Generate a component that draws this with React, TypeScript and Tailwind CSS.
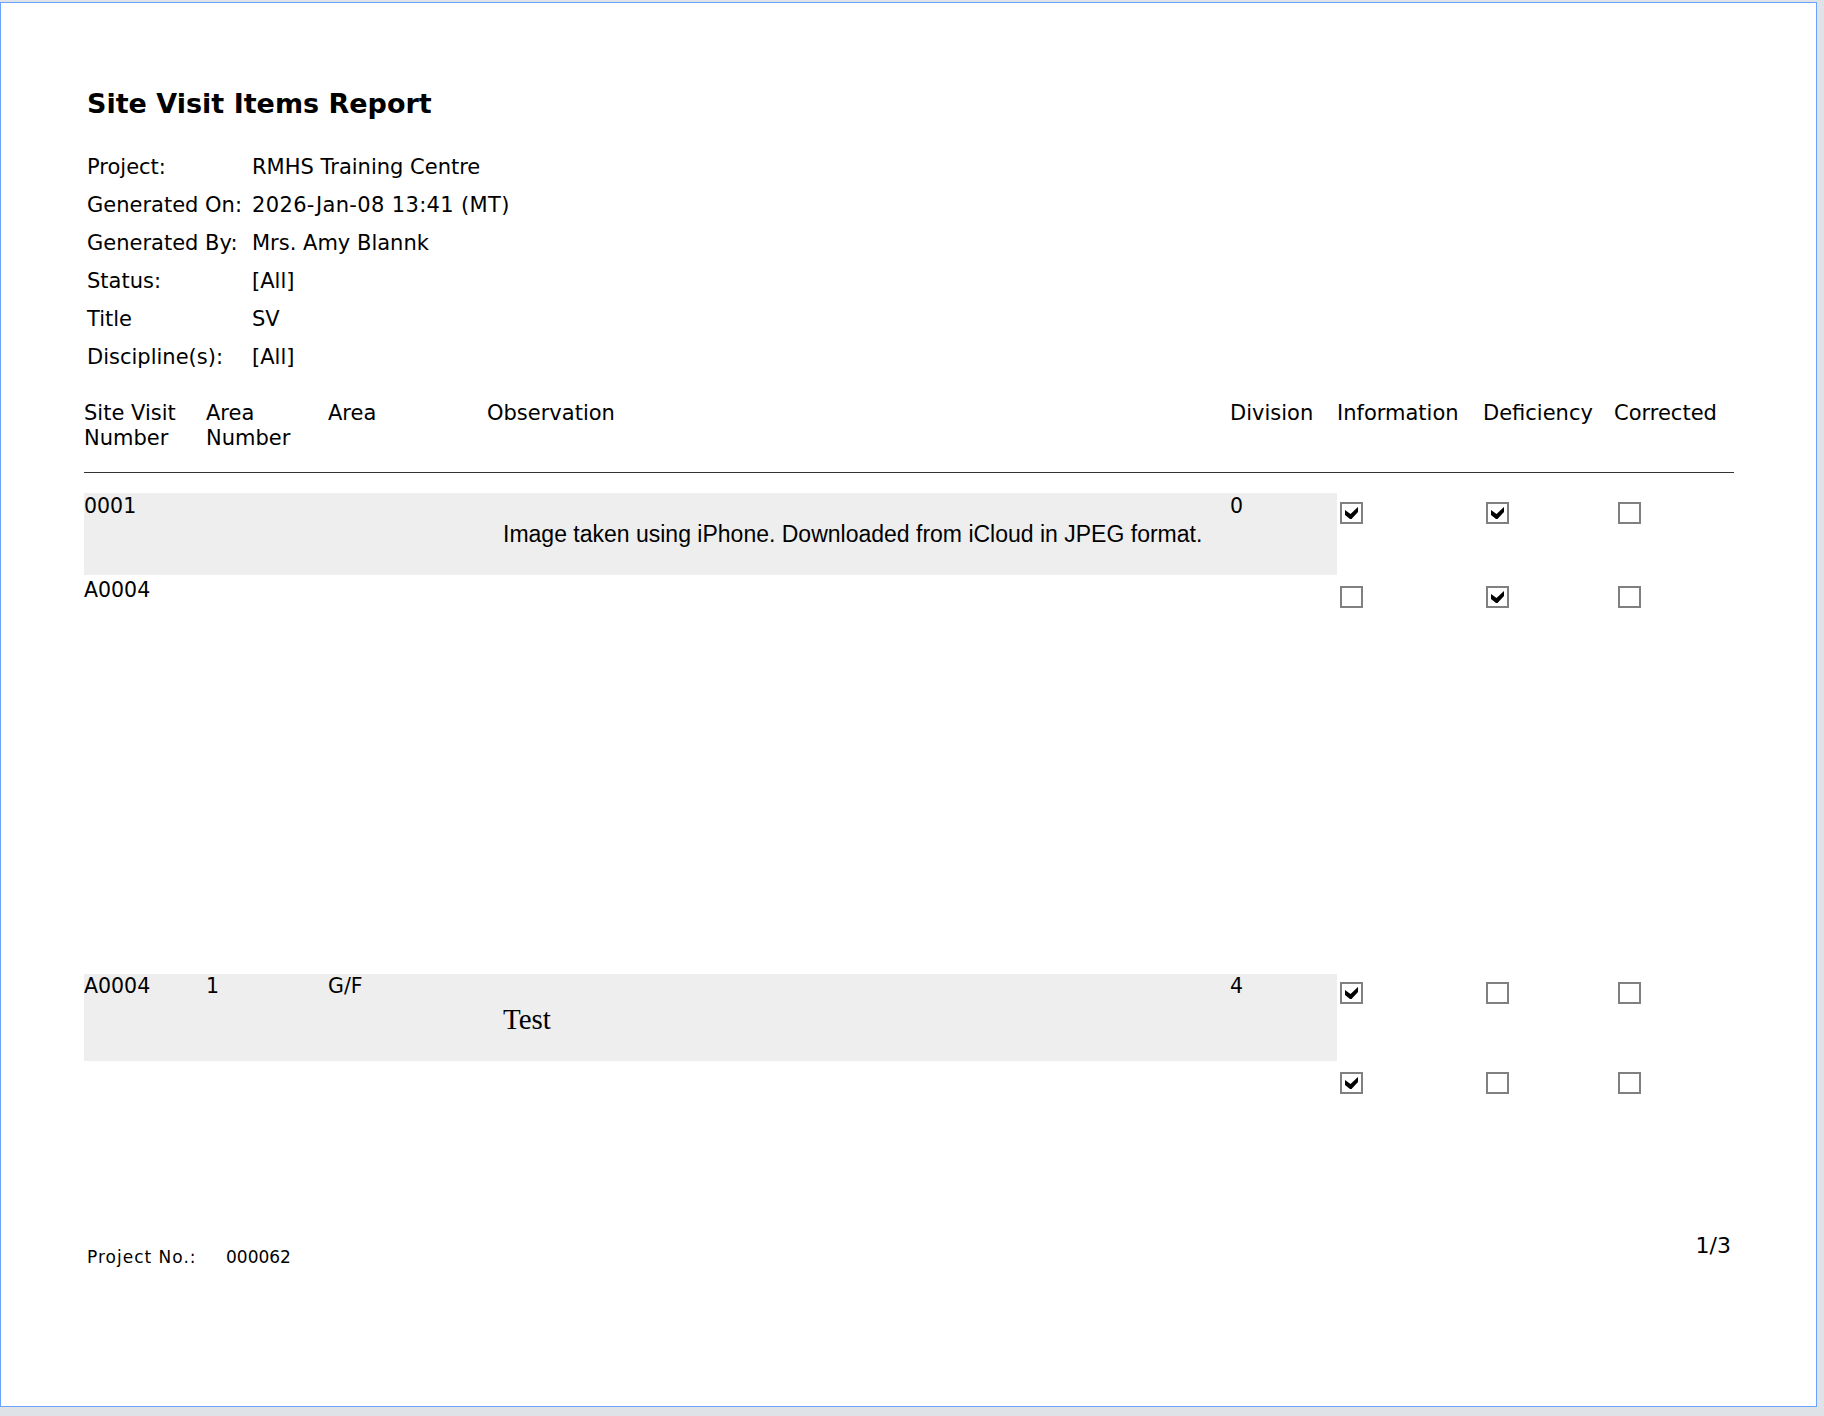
const SANS = "font-['DejaVu_Sans',sans-serif]";

function Check({ on }: { on?: boolean }) {
  return (
    <span className="flex h-[22px] w-[23px] items-center justify-center border-2 border-[#808080] bg-white">
      {on && (
        <svg width="13" height="12" viewBox="0 0 13 12">
          <path d="M0 3 L5.5 7 L13 0 L13 5 L6.5 12 L5 12 L0 8 Z" fill="#000" />
        </svg>
      )}
    </span>
  );
}

const META = [
  ['Project:', 'RMHS Training Centre', ''],
  ['Generated On:', '2026-Jan-08 13:41 (MT)', 'tracking-[0.35px]'],
  ['Generated By:', 'Mrs. Amy Blannk', ''],
  ['Status:', '[All]', ''],
  ['Title', 'SV', ''],
  ['Discipline(s):', '[All]', ''],
];

// column template shared by the item rows
const COLS = 'grid grid-cols-[122px_122px_159px_743px_107px] text-[20.5px]';

function Marks({ marks, className }: { marks: boolean[]; className: string }) {
  return (
    <div className={`flex ${className}`}>
      <div className="w-[146px] pl-[3px]"><Check on={marks[0]} /></div>
      <div className="w-[132px] pl-[3px]"><Check on={marks[1]} /></div>
      <div className="pl-[3px]"><Check on={marks[2]} /></div>
    </div>
  );
}

export default function App() {
  return (
    <div className={`h-[1416px] w-[1824px] overflow-hidden bg-[#dfe3e8] pt-[2px] text-[21px] text-black ${SANS}`}>
      <div className="h-[1405px] w-[1817px] border border-[#6aa2ff] bg-white">
        <div className="pl-[86px] pt-[83px]">
          <h1 className="text-[27px] font-bold leading-[36px]">Site Visit Items Report</h1>
          <div className="mt-[27px] flex flex-col">
            {META.map(([k, v, extra]) => (
              <div key={k} className="flex h-[38px] items-center">
                <span className="w-[165px]">{k}</span>
                <span className={extra}>{v}</span>
              </div>
            ))}
          </div>
        </div>

        <div className="ml-[83px] mt-[17px] w-[1650px]">
          <div className="grid h-[79px] grid-cols-[122px_122px_159px_743px_107px_146px_131px_1fr] border-b border-[#333] pt-[7px] leading-[25px]">
            <div>Site Visit<br />Number</div>
            <div>Area<br />Number</div>
            <div>Area</div>
            <div>Observation</div>
            <div>Division</div>
            <div>Information</div>
            <div>Deficiency</div>
            <div>Corrected</div>
          </div>

          <div className="mt-[20px] flex items-start">
            <div className={`${COLS} h-[82px] w-[1253px] bg-[#eeeeee] pt-[1px] leading-[25px]`}>
              <div>0001</div><div /><div />
              <div className="whitespace-nowrap pl-[16px] pt-[22px] font-['Liberation_Sans',sans-serif] text-[23px] leading-[36px]">Image taken using iPhone. Downloaded from iCloud in JPEG format.</div>
              <div>0</div>
            </div>
            <Marks marks={[true, true, false]} className="pt-[9px]" />
          </div>

          <div className="mt-[3px] flex items-start">
            <div className="h-[396px] w-[1253px] text-[20.5px] leading-[25px]">A0004</div>
            <Marks marks={[false, true, false]} className="pt-[8px]" />
          </div>

          <div className="flex items-start">
            <div className={`${COLS} h-[87px] w-[1253px] bg-[#eeeeee] leading-[25px]`}>
              <div>A0004</div><div>1</div><div>G/F</div>
              <div className="pl-[16px] pt-[27px] font-['Liberation_Serif',serif] text-[29px] leading-[36px]">Test</div>
              <div>4</div>
            </div>
            <Marks marks={[true, false, false]} className="pt-[8px]" />
          </div>

          <div className="mt-[11px] flex">
            <div className="w-[1253px]" />
            <Marks marks={[true, false, false]} className="" />
          </div>
        </div>

        <div className="mt-[138px] flex items-start justify-between pl-[86px] pr-[85px]">
          <div className="mt-[15px] flex text-[17px] leading-[20px]">
            <span className="w-[139px] tracking-[1px]">Project No.:</span>
            <span>000062</span>
          </div>
          <span className="mt-[1px] text-[22px] leading-[25px]">1/3</span>
        </div>
      </div>
    </div>
  );
}
